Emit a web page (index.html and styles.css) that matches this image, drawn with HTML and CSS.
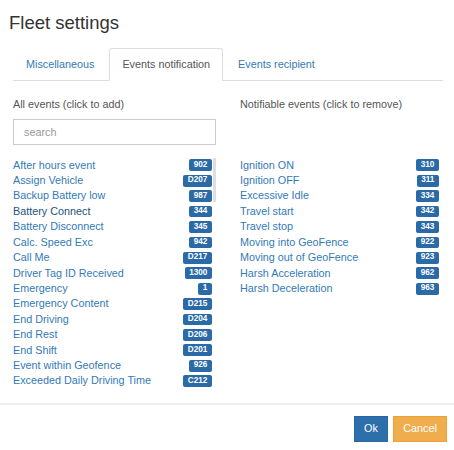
FILE: index.html
```html
<!DOCTYPE html>
<html lang="en">
<head>
    <meta charset="UTF-8">
    <title>Fleet settings</title>
    <link rel="stylesheet" href="styles.css">
</head>
<body>
    <div class="modal">
        <div class="modal-header">
            <h3>Fleet settings</h3>
        </div>

        <div class="modal-body">
            <ul class="nav-tabs">
                <li><a href="#">Miscellaneous</a></li>
                <li class="active"><a href="#">Events notification</a></li>
                <li><a href="#">Events recipient</a></li>
            </ul>

            <div class="events">
                <div class="col-title left-title">All events (click to add)</div>
                <div class="col-title right-title">Notifiable events (click to remove)</div>

                <input class="search" type="text" placeholder="search">

                <div class="event-list all-list">
                    <a class="event" href="#">After hours event <span class="label">902</span></a>
                    <a class="event" href="#">Assign Vehicle <span class="label">D207</span></a>
                    <a class="event" href="#">Backup Battery low <span class="label">987</span></a>
                    <a class="event hover" href="#">Battery Connect <span class="label">344</span></a>
                    <a class="event" href="#">Battery Disconnect <span class="label">345</span></a>
                    <a class="event" href="#">Calc. Speed Exc <span class="label">942</span></a>
                    <a class="event" href="#">Call Me <span class="label">D217</span></a>
                    <a class="event" href="#">Driver Tag ID Received <span class="label">1300</span></a>
                    <a class="event" href="#">Emergency <span class="label">1</span></a>
                    <a class="event" href="#">Emergency Content <span class="label">D215</span></a>
                    <a class="event" href="#">End Driving <span class="label">D204</span></a>
                    <a class="event" href="#">End Rest <span class="label">D206</span></a>
                    <a class="event" href="#">End Shift <span class="label">D201</span></a>
                    <a class="event" href="#">Event within Geofence <span class="label">926</span></a>
                    <a class="event" href="#">Exceeded Daily Driving Time <span class="label">C212</span></a>
                </div>

                <div class="event-list chosen-list">
                    <a class="event" href="#">Ignition ON <span class="label">310</span></a>
                    <a class="event" href="#">Ignition OFF <span class="label">311</span></a>
                    <a class="event" href="#">Excessive Idle <span class="label">334</span></a>
                    <a class="event" href="#">Travel start <span class="label">342</span></a>
                    <a class="event" href="#">Travel stop <span class="label">343</span></a>
                    <a class="event" href="#">Moving into GeoFence <span class="label">922</span></a>
                    <a class="event" href="#">Moving out of GeoFence <span class="label">923</span></a>
                    <a class="event" href="#">Harsh Acceleration <span class="label">962</span></a>
                    <a class="event" href="#">Harsh Deceleration <span class="label">963</span></a>
                </div>
            </div>
        </div>

        <div class="modal-footer">
            <button class="btn btn-primary">Ok</button>
            <button class="btn btn-warning">Cancel</button>
        </div>
    </div>
</body>
</html>
```

FILE: styles.css
```css
* {
    margin: 0;
    padding: 0;
    box-sizing: border-box;
}

body {
    background: #fff;
    font-family: 'Liberation Sans', Arial, sans-serif;
    font-size: 10.8px;
    line-height: 1.42857;
    color: #333;
}

a {
    color: #337ab7;
    text-decoration: none;
}

.modal {
    width: 454px;
}

.modal-header {
    padding: 13px 9px 15px;
}

.modal-header h3 {
    font-size: 18.5px;
    font-weight: 400;
    line-height: 1.1;
    color: #333;
}

.modal-body {
    padding: 0 11px 13px 13px;
}

.nav-tabs {
    list-style: none;
    display: flex;
    border-bottom: 1px solid #ddd;
}

.nav-tabs li {
    margin-bottom: -1px;
    margin-right: 2px;
}

.nav-tabs a {
    display: block;
    padding: 7.7px 12px;
    border: 1px solid transparent;
    border-radius: 3px 3px 0 0;
}

.nav-tabs .active a {
    color: #555;
    background: #fff;
    border-color: #ddd;
    border-bottom-color: transparent;
}

.events {
    display: grid;
    grid-template-columns: 203px 203px;
    grid-template-areas:
        "left-title right-title"
        "search ."
        "all chosen";
    column-gap: 24px;
    margin-top: 16px;
}

.col-title {
    color: #555;
}

.left-title { grid-area: left-title; }
.right-title { grid-area: right-title; }

.search {
    grid-area: search;
    margin-top: 6px;
    height: 26px;
    padding: 0 10px;
    border: 1px solid #ccc;
    border-radius: 0;
    font-family: inherit;
    font-size: 10.8px;
    color: #555;
    outline: none;
}

.search::placeholder {
    color: #999;
}

.event-list {
    margin-top: 13px;
    height: 232px;
    overflow: hidden;
    padding-right: 4px;
}

.all-list {
    grid-area: all;
    position: relative;
}

/* thin scrollbar thumb */
.all-list::after {
    content: '';
    position: absolute;
    top: 0;
    right: 0;
    width: 3px;
    height: 44px;
    background: #dedede;
}

.chosen-list {
    grid-area: chosen;
}

.event {
    display: flex;
    justify-content: space-between;
    align-items: center;
    height: 15.43px;
}

.event.hover {
    color: #23527c;
}

.label {
    display: inline-block;
    background: #2a6aa6;
    color: #fff;
    font-size: 8.2px;
    font-weight: 700;
    line-height: 1;
    padding: 1.5px 4.6px 2px;
    border-radius: 2px;
}

.modal-footer {
    border-top: 2px solid #eee;
    padding: 11px 7px 8px;
    display: flex;
    justify-content: flex-end;
    gap: 5px;
}

.btn {
    font-family: inherit;
    font-size: 10.8px;
    line-height: 1.42857;
    padding: 4.5px 9.2px;
    border: 1px solid transparent;
    border-radius: 0;
    color: #fff;
    cursor: pointer;
}

.btn-primary {
    background: #2d6fab;
    border-color: #2a67a0;
}

.btn-warning {
    background: #f0ad4e;
    border-color: #eea236;
}
```
